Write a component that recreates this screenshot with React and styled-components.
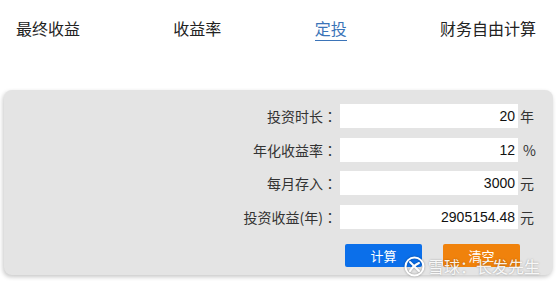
import styled, { createGlobalStyle } from "styled-components";

const GlobalStyle = createGlobalStyle`
  html, body {
    margin: 0;
    padding: 0;
    background: #fff;
  }
  body {
    font-family: "Liberation Sans", Arial, "Noto Sans CJK SC", sans-serif;
    overflow: hidden;
  }
`;

const Page = styled.div`
  position: relative;
  width: 557px;
  height: 284px;
  overflow: hidden;
`;

const Tabs = styled.nav`
  display: flex;
  justify-content: space-between;
  align-items: center;
  height: 58px;
  padding: 0 21px 0 16px;
  font-family: "Noto Sans CJK SC", sans-serif;
  font-size: 16px;
`;

const Tab = styled.span`
  color: ${(p) => (p.$active ? "#3b74b8" : "#222")};
  line-height: 20px;
  padding-bottom: 2px;
  border-bottom: 1px solid ${(p) => (p.$active ? "#3b74b8" : "transparent")};
`;

const Panel = styled.section`
  margin: 32px 4px 0 4px;
  padding: 14px 18px 8px 0;
  background: #e4e4e4;
  border-radius: 8px;
  box-shadow: -1px 2px 4px rgba(0, 0, 0, 0.22);
  display: flex;
  flex-direction: column;
  gap: 9.5px;
`;

const Row = styled.div`
  display: grid;
  grid-template-columns: 1fr 178px 17px;
  align-items: center;
  height: 24px;
`;

const Label = styled.label`
  text-align: right;
  font-family: "Noto Sans CJK SC", sans-serif;
  font-size: 14px;
  color: #333;
  padding-right: 3px;
`;

const Colon = styled.span`
  font-family: "Noto Sans CJK TC", sans-serif;
`;

const Field = styled.div`
  height: 24px;
  background: #fff;
  text-align: right;
  line-height: 24px;
  padding-right: 3px;
  font-size: 14px;
  color: #111;
  box-sizing: border-box;
`;

const Unit = styled.span`
  padding-left: ${(p) => (p.$pad ? 5 : 2)}px;
  font-family: "Noto Sans CJK SC", sans-serif;
  font-size: 14px;
  color: #333;
`;

const Buttons = styled.div`
  display: flex;
  justify-content: flex-end;
  gap: 21px;
  padding-right: 15px;
  margin-top: 5.5px;
`;

const Button = styled.button`
  width: 77px;
  height: 23px;
  border: none;
  border-radius: 2px;
  background: ${(p) => p.$bg};
  color: #fff;
  font-family: "Noto Sans CJK SC", sans-serif;
  font-size: 13px;
  padding: 0;
  line-height: 21px;
`;

const Watermark = styled.div`
  position: absolute;
  left: 404px;
  top: 255px;
  display: flex;
  align-items: center;
  gap: 3px;
  white-space: nowrap;
  color: rgba(255, 255, 255, 0.92);
  font-family: "Noto Sans CJK SC", sans-serif;
  font-size: 16px;
  line-height: 22px;
  text-shadow: 0 0 2px rgba(0, 0, 0, 0.35);
`;

const rows = [
  { label: "投资时长", value: "20", unit: "年" },
  { label: "年化收益率", value: "12", unit: "%", pad: true },
  { label: "每月存入", value: "3000", unit: "元" },
  { label: "投资收益(年)", value: "2905154.48", unit: "元" },
];

const Logo = () => (
  <svg width="21" height="21" viewBox="0 0 21 21" style={{ filter: "drop-shadow(0 0 1px rgba(0,0,0,0.35))" }}>
    <circle cx="10.5" cy="10.5" r="9" fill="none" stroke="#fff" strokeWidth="2" />
    <path d="M6 6 L15 15 M6 15 C8 11 11 9 15 7" fill="none" stroke="#fff" strokeWidth="2" strokeLinecap="round" />
  </svg>
);

const App = () => (
  <Page>
    <GlobalStyle />
    <Tabs>
      <Tab>最终收益</Tab>
      <Tab>收益率</Tab>
      <Tab $active>定投</Tab>
      <Tab>财务自由计算</Tab>
    </Tabs>
    <Panel>
      {rows.map((r) => (
        <Row key={r.label}>
          <Label>
            {r.label}
            <Colon>：</Colon>
          </Label>
          <Field>{r.value}</Field>
          <Unit $pad={r.pad}>{r.unit}</Unit>
        </Row>
      ))}
      <Buttons>
        <Button $bg="#0b6fea">计算</Button>
        <Button $bg="#f0820c">清空</Button>
      </Buttons>
    </Panel>
    <Watermark>
      <Logo />
      <span>雪球：长发先生</span>
    </Watermark>
  </Page>
);

export default App;
